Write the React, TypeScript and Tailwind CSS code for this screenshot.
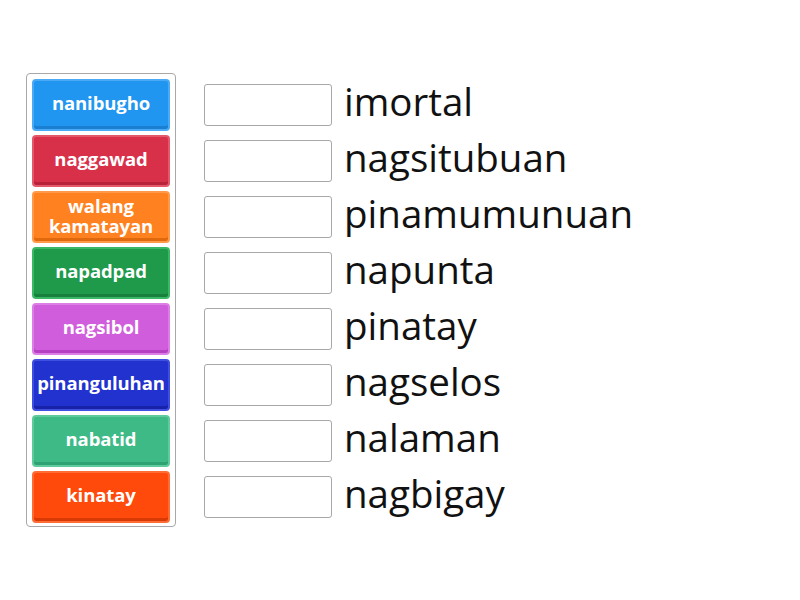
import React from 'react';

const tiles = [
  { label: 'nanibugho', bg: 'bg-[#2196f0]', edge: 'border-[#4aaaf5]', bottom: 'shadow-[inset_0_-3px_0_#1a7fd0]' },
  { label: 'naggawad', bg: 'bg-[#d9304a]', edge: 'border-[#e4586b]', bottom: 'shadow-[inset_0_-3px_0_#b8213a]' },
  { label: 'walang kamatayan', bg: 'bg-[#ff8120]', edge: 'border-[#ff9a4a]', bottom: 'shadow-[inset_0_-3px_0_#e0690e]', small: true },
  { label: 'napadpad', bg: 'bg-[#1f9a4b]', edge: 'border-[#3bb866]', bottom: 'shadow-[inset_0_-3px_0_#17803c]' },
  { label: 'nagsibol', bg: 'bg-[#d05ddb]', edge: 'border-[#dc7ee5]', bottom: 'shadow-[inset_0_-3px_0_#b640c2]' },
  { label: 'pinanguluhan', bg: 'bg-[#2232cf]', edge: 'border-[#3f4fe0]', bottom: 'shadow-[inset_0_-3px_0_#1722a8]' },
  { label: 'nabatid', bg: 'bg-[#3dba86]', edge: 'border-[#5fcb9d]', bottom: 'shadow-[inset_0_-3px_0_#2ea272]' },
  { label: 'kinatay', bg: 'bg-[#ff4a0c]', edge: 'border-[#ff6d35]', bottom: 'shadow-[inset_0_-3px_0_#d83a05]' },
];

const words = ['imortal', 'nagsitubuan', 'pinamumunuan', 'napunta', 'pinatay', 'nagselos', 'nalaman', 'nagbigay'];

export default function App() {
  return (
    <div className="w-[800px] h-[600px] bg-white font-['Open_Sans',sans-serif]">
      <div className="flex items-start pt-[73px] pl-[26px] gap-[28px]">
        {/* tiles to drag */}
        <div className="w-[150px] border border-[#a8a8a8] rounded-[4px] px-[5px] pt-[5px] pb-[3px] flex flex-col gap-[4px]">
          {tiles.map((t) => (
            <div
              key={t.label}
              className={`h-[52px] rounded-[4px] border-[2px] ${t.bg} ${t.edge} ${t.bottom} flex items-center justify-center text-center text-white font-bold text-[18.5px] pb-[3px] tracking-[-0.1px] ${
                t.small ? 'leading-[20px]' : 'leading-none'
              }`}
            >
              {t.label}
            </div>
          ))}
        </div>

        {/* answer rows */}
        <div className="flex flex-col gap-[4px] pt-[6px]">
          {words.map((w) => (
            <div key={w} className="h-[52px] flex items-center gap-[12px]">
              <div className="w-[128px] h-[42px] border border-[#a8a8a8] rounded-[3px] bg-white" />
              <span className="text-[38.5px] text-[#111] leading-none pb-[8px]">{w}</span>
            </div>
          ))}
        </div>
      </div>
    </div>
  );
}
